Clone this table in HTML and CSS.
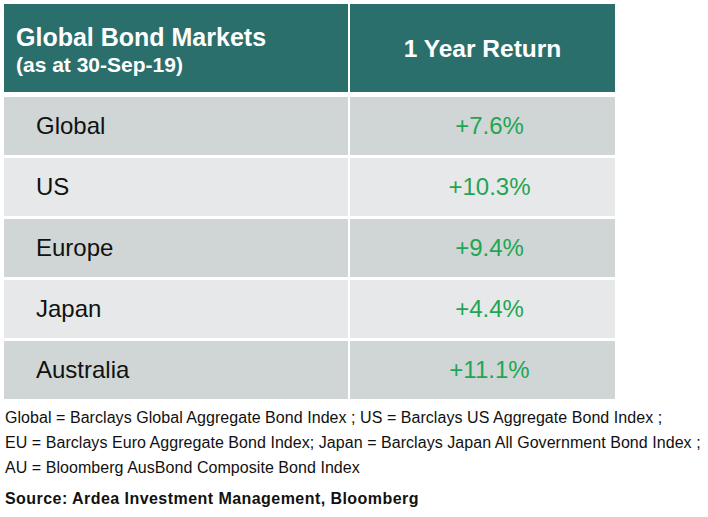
FILE: index.html
```html
<!DOCTYPE html>
<html>
<head>
<meta charset="utf-8">
<link rel="stylesheet" href="styles.css">
</head>
<body>
<div class="page">
  <div class="table">
    <div class="row head">
      <div class="cell head-left">
        <div class="title">Global Bond Markets</div>
        <div class="subtitle">(as at 30-Sep-19)</div>
      </div>
      <div class="cell head-right">1 Year Return</div>
    </div>
    <div class="row dark">
      <div class="cell label">Global</div>
      <div class="cell value">+7.6%</div>
    </div>
    <div class="row light">
      <div class="cell label">US</div>
      <div class="cell value">+10.3%</div>
    </div>
    <div class="row dark">
      <div class="cell label">Europe</div>
      <div class="cell value">+9.4%</div>
    </div>
    <div class="row light">
      <div class="cell label">Japan</div>
      <div class="cell value">+4.4%</div>
    </div>
    <div class="row dark">
      <div class="cell label">Australia</div>
      <div class="cell value">+11.1%</div>
    </div>
  </div>
  <div class="notes">
    <div class="note">Global = Barclays Global Aggregate Bond Index ; US = Barclays US Aggregate Bond Index ;</div>
    <div class="note">EU = Barclays Euro Aggregate Bond Index; Japan = Barclays Japan All Government Bond Index ;</div>
    <div class="note">AU = Bloomberg AusBond Composite Bond Index</div>
    <div class="source">Source: Ardea Investment Management, Bloomberg</div>
  </div>
</div>
</body>
</html>
```
FILE: styles.css
```css
html, body {
  margin: 0;
  padding: 0;
  background: #ffffff;
}
body {
  font-family: "Liberation Sans", Arial, sans-serif;
  color: #111111;
}
.page {
  width: 708px;
  height: 517px;
  overflow: hidden;
}
.table {
  margin: 4px 0 0 4px;
  width: 611px;
  display: flex;
  flex-direction: column;
  gap: 3px;
}
.row {
  display: grid;
  grid-template-columns: 344px 265px;
  column-gap: 2px;
  height: 58px;
}
.row.head {
  height: 88px;
  margin-bottom: 2px;
}
.head .cell {
  background: #2b6f6d;
  color: #ffffff;
  font-weight: bold;
}
.head-left {
  padding: 19px 0 0 12px;
}
.title {
  font-size: 25px;
  line-height: 28px;
}
.subtitle {
  font-size: 21px;
  line-height: 28px;
}
.head-right {
  display: flex;
  align-items: center;
  justify-content: center;
  font-size: 24.5px;
  padding-top: 2px;
  box-sizing: border-box;
}
.dark .cell {
  background: #cfd6d5;
}
.light .cell {
  background: #e7e8e9;
}
.label {
  display: flex;
  align-items: center;
  padding-left: 32px;
  font-size: 24px;
  color: #111111;
}
.value {
  display: flex;
  align-items: center;
  justify-content: center;
  padding-left: 14px;
  font-size: 24px;
  color: #1fa553;
}
.notes {
  padding: 6px 0 0 5px;
}
.note {
  font-size: 16px;
  line-height: 25px;
  letter-spacing: 0.05px;
  color: #111111;
}
.source {
  margin-top: 6px;
  font-size: 16px;
  line-height: 25px;
  font-weight: bold;
  letter-spacing: 0.45px;
  color: #111111;
}
```
